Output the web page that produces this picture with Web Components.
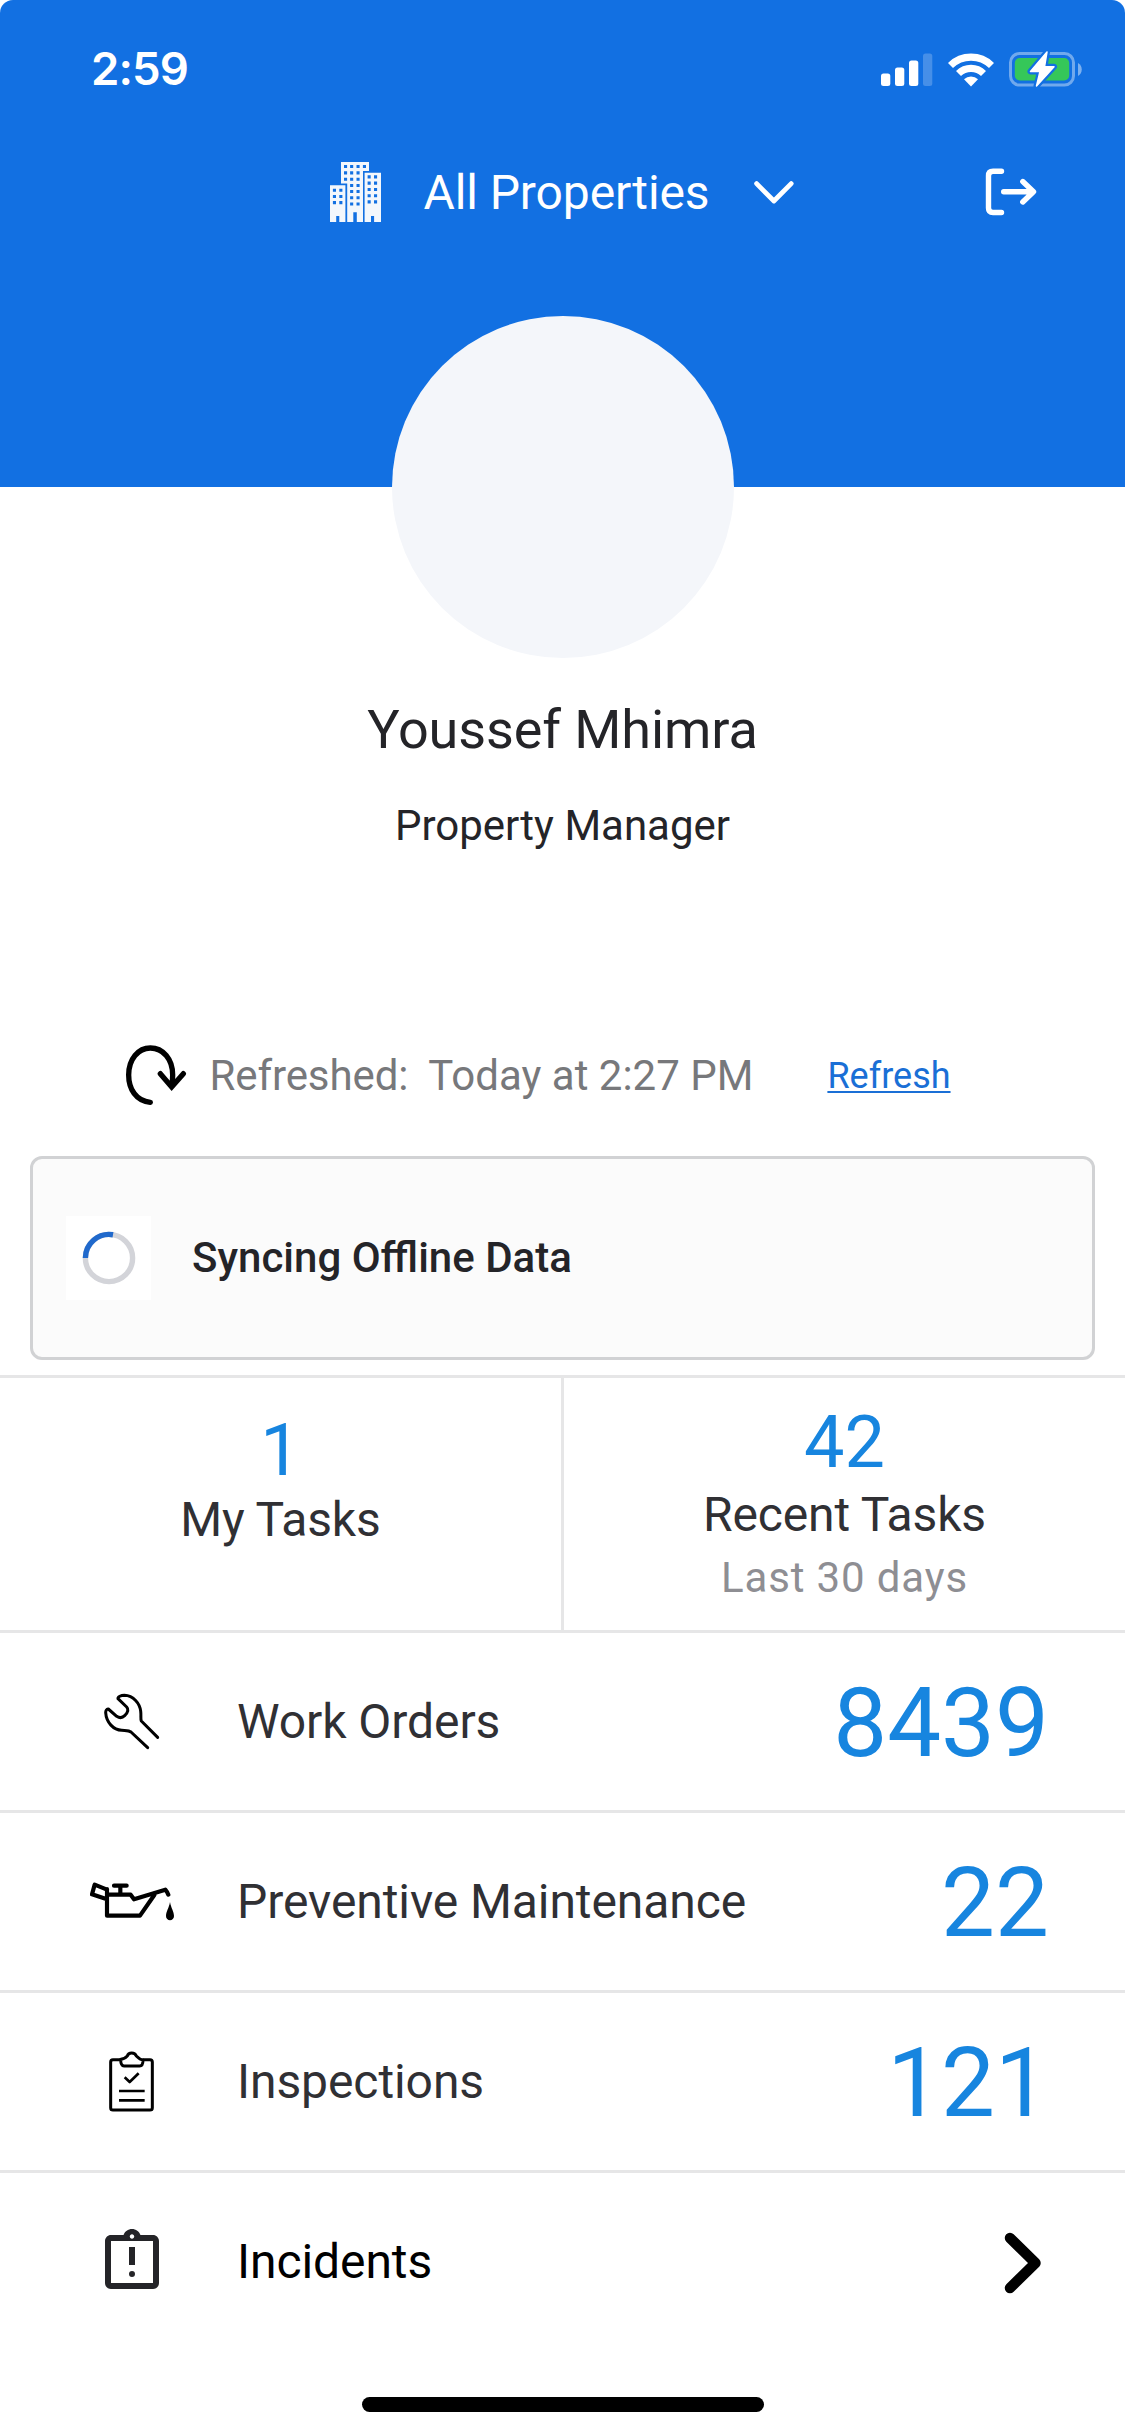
<!DOCTYPE html>
<html lang="en">
<head>
<meta charset="utf-8">
<title>Property Dashboard</title>
<style>
html,body{margin:0;padding:0;background:#fff}
</style>
</head>
<body>
<pm-app></pm-app>
<script>
function define(tag, css, html) {
  customElements.define(tag, class extends HTMLElement {
    constructor() {
      super();
      this.attachShadow({mode: 'open'}).innerHTML =
        '<style>*{box-sizing:border-box}svg{display:block;flex:none}' + css + '</style>' + (typeof html === 'function' ? html(this) : html);
    }
  });
}

/* Skyline glyph: three towers with window grids punched out. */
function skyline() {
  const w = (x, y, a = 3.1, b = 3.1) => `M${x} ${y}h${a}v${b}h${-a}z`;
  let d = 'M11 0H39V9H33V60H17.2V21.5H11ZM0 23.3H15.4V60H0ZM34.6 10.7H51V60H34.6Z';
  [3, 9.3, 15.7, 21.9, 28, 34.2, 40.5].forEach((y, i) => {
    if (i < 3) d += w(14, y);
    d += w(20.1, y) + w(26.5, y);
    if (!i) d += w(32.9, y);
  });
  [26.7, 33, 39.1].forEach(y => d += w(2.9, y) + w(9.3, y));
  [13.3, 19.6, 26, 32.2, 38.3].forEach(y => d += w(37.6, y) + w(44, y));
  d += w(6.2, 54, 3.1, 6) + w(23.3, 50.3, 3.5, 9.7) + w(41, 54, 3.1, 6);
  return `<svg width="51" height="60" viewBox="0 0 51 60"><path fill="#f3f7fc" fill-rule="evenodd" d="${d}"/></svg>`;
}

define('pm-status-bar', `
:host{display:flex;height:138px;padding:0 43px 0 91px;align-items:center;justify-content:space-between;color:#fff}
.time{font:600 45.500px/56px Inter,sans-serif;letter-spacing:-.9px}
.icons{display:flex;align-items:center;gap:15px}`, `
<span class="time">2:59</span>
<div class="icons">
<svg width="52" height="34" viewBox="0 0 52 34" fill="#fff"><rect y="21.500" width="9.300" height="12.500" rx="2.500"/><rect x="14" y="15.500" width="9.300" height="18.500" rx="2.500"/><rect x="28" y="8.500" width="9.300" height="25.500" rx="2.500"/><rect x="42" y="1.500" width="9.300" height="32.500" rx="2.500" opacity=".22"/></svg>
<svg width="46" height="35" viewBox="0 0 46 35" fill="none" stroke="#fff" stroke-width="7.200"><path d="M2.500 13.500A29.500 29.500 0 0 1 43.500 13.500M10.500 21.500A18 18 0 0 1 35.500 21.500"/><path fill="#fff" stroke="none" d="M23 34.500L16 27.300A10 10 0 0 1 30 27.300Z"/></svg>
<svg width="73" height="36" viewBox="0 0 73 36"><rect x="1.500" y="2.500" width="63" height="31.500" rx="9" fill="none" stroke="#fff" stroke-opacity=".4" stroke-width="3"/><path fill="#fff" fill-opacity=".45" d="M69 12C74 14.500 74 22.500 69 25Z"/><rect x="5.800" y="7" width="54.400" height="22.500" rx="5" fill="#35c759"/><path d="M38 1L21.500 20.500H31L27.500 35L45 15.800H35.500Z" fill="#fff" stroke="#1270e2" stroke-width="6" stroke-linejoin="round" paint-order="stroke"/><path d="M38 1L21.500 20.500H31L27.500 35L45 15.800H35.500Z" fill="#fff" stroke="#fff" stroke-width="1.500" stroke-linejoin="round"/></svg>
</div>`);

define('pm-property-picker', `
:host{display:grid;grid-template-columns:1fr auto 1fr;height:108px;align-items:center;padding:0 88px 0 88px}
.pick{grid-column:2;display:flex;align-items:center;margin-left:-1px}
.label{font-size:48px;line-height:60px;color:#fff;margin:2px 44px 0 42px;white-space:nowrap;letter-spacing:-.1px}
.exit{justify-self:end}`, `
<div class="pick">${skyline()}<span class="label"><slot></slot></span>
<svg width="40" height="23" viewBox="0 0 40 23" fill="none" stroke="#fff" stroke-width="4.800" stroke-linecap="round" stroke-linejoin="round"><path d="M2.600 2.600L19.900 20L37.200 2.600"/></svg></div>
<svg class="exit" width="52" height="48" viewBox="0 0 52 48" fill="none" stroke="#fff" stroke-width="5.400" stroke-linecap="round" stroke-linejoin="round"><path d="M16.500 3.300H8Q3.500 3.300 3.500 7.800V40Q3.500 44.500 8 44.500H16.500M18.700 23.700H48M37.800 13.500L48.500 23.700L37.800 34"/></svg>`);

define('pm-header', `:host{display:block;height:487px;background:#1270e2;border-radius:13px 13px 0 0}`, `
<pm-status-bar></pm-status-bar><pm-property-picker>All Properties</pm-property-picker>`);

define('pm-profile', `
:host{display:flex;flex-direction:column;align-items:center;margin-top:-171px;color:#242428}
.avatar{width:342px;height:342px;border-radius:50%;background:#f4f6fa}
.name{font-size:54px;line-height:64px;margin-top:40px;letter-spacing:-.1px}
.role{font-size:42px;line-height:50px;margin-top:39px}`, `
<div class="avatar"></div><div class="name"><slot name="name"></slot></div><div class="role"><slot name="role"></slot></div>`);

define('pm-refresh', `
:host{display:flex;height:90px;margin-top:180px;padding-left:125px;align-items:center;color:#77787b;font-size:42px;line-height:50px;white-space:nowrap}
svg{margin-top:-2px}
.k{margin-left:22.500px;letter-spacing:-.1px}.v{margin-left:20px}
a{margin-left:74px;font-size:36px;line-height:44px;color:#1a6fd6;text-decoration:underline;text-decoration-thickness:2px;text-underline-offset:3px}`, `
<svg width="62" height="62" viewBox="75 71 186 186" fill="none" stroke="#000" stroke-width="16" stroke-linecap="round"><path d="M151 246C108 242 86 206 86 164C86 116 115 83 151 83C189 83 218 116 218 164C218 178 217 188 215 198M181 160L215 200L250 160"/></svg>
<span class="k">Refreshed:</span><span class="v">Today at 2:27 PM</span><a>Refresh</a>`);

define('pm-sync-card', `
:host{display:flex;height:204px;margin:35px 30px 0;border:3px solid #d1d2d4;border-radius:12px;background:#fbfbfb;align-items:center;padding-left:33px}
.tile{width:85px;height:84px;background:#fff;display:flex;align-items:center;justify-content:center}
.t{margin-left:41px;font-size:42px;font-weight:500;line-height:50px;color:#242428}`, `
<div class="tile"><svg width="54" height="54" viewBox="-27 -27 54 54" fill="none" stroke-width="5.400"><circle r="23.600" stroke="#d3d4d9"/><path d="M-23.600 0A23.600 23.600 0 0 1 4 -23.250" stroke="#2069cc"/></svg></div>
<span class="t"><slot></slot></span>`);

define('pm-stat', `
:host{display:flex;flex-direction:column;align-items:center;padding-top:37px}
:host([wide]){padding-top:29px}
.n{font-size:72px;line-height:72px;color:#1785df}
.l{font-size:48px;line-height:60px;margin-top:3px;color:#303034;letter-spacing:-.15px}
:host([wide]) .l{margin-top:6px}
.s{font-size:42px;line-height:50px;margin-top:8px;color:#8e8e93;letter-spacing:.85px}`, `
<div class="n"><slot name="n"></slot></div><div class="l"><slot></slot></div><div class="s"><slot name="s"></slot></div>`);

define('pm-stats', `
:host{display:grid;grid-template-columns:561px 1fr;height:255px;margin-top:15px;border-top:3px solid #e6e6e7}
::slotted(:last-child){border-left:3px solid #e6e6e7}`, `<slot></slot>`);

const icons = {
  wrench: `<svg width="57" height="57" viewBox="131 129 171 171" fill="none" stroke="#000" stroke-width="9" stroke-linecap="round" stroke-linejoin="round"><path d="M292 262L243 213C240 207 243 198 241 183C238 160 220 137 192 136C182 136 172 140 173 146L199 171C206 179 201 189 193 197C185 205 177 204 169 199L144 177C139 176 136 182 136 188C138 218 160 240 184 241C199 242 206 241 212 246L262 293"/></svg>`,
  oil: `<svg width="84" height="40" viewBox="90 697 252 120" fill="none" stroke="#000" stroke-width="12.500" stroke-linejoin="round" stroke-linecap="round"><path d="M141 720L104 705L96 734L141 749M141 718V798H240L283 736M141 735H212L222 749L316 720Q322 727 325 735M162 708H200M181 708V735"/><path fill="#000" stroke="none" d="M330 757C327 775 318 786 318 799A12 13 0 0 0 342 799C342 786 333 775 330 757Z"/></svg>`,
  clipboard: `<svg width="46" height="61" viewBox="147 184 138 183" fill="none" stroke="#000" stroke-width="9" stroke-linejoin="round"><path d="M182 210H159Q152 210 152 217V354Q152 361 159 361H270Q277 361 277 354V217Q277 210 270 210H248"/><path d="M182 209C182 223 184 229 192 229H239C247 229 249 222 249 211C240 210 235 205 229 199C226 191 221 190 215 190C209 190 204 192 202 199C196 205 190 209 182 209Z"/><path stroke-width="8" d="M194 263L209 277L236 251M177 304H254M177 332H254"/></svg>`,
  late: `<svg width="72" height="72" viewBox="0 0 24 24" fill="#242428"><path d="M19 3h-4.180C14.400 1.840 13.300 1 12 1s-2.400.84-2.820 2H5c-1.100 0-2 .9-2 2v14c0 1.100.9 2 2 2h14c1.100 0 2-.9 2-2V5c0-1.100-.9-2-2-2zm-7-.25c.41 0 .75.34.75.75s-.34.75-.75.75-.75-.34-.75-.75.340-.75.750-.75zM19 19H5V5h14v14zM11 7h2v6h-2zM12 15a1 1 0 1 0 0 2 1 1 0 1 0 0-2z" fill-rule="evenodd"/></svg>`
};

define('pm-row', `
:host{display:flex;height:180px;border-top:3px solid #e6e6e7;align-items:center;padding:0 76px 0 60px;color:#303034}
:host([go]){color:#000}
.i{width:144px;display:flex;justify-content:center;flex:none}
.l{flex:1;margin-left:33px;font-size:48px;line-height:60px;letter-spacing:-.08px}
.n{font-size:96px;line-height:112px;color:#1785df;margin-top:2px}
.go{margin:3px 7px 0 0}`, el => `
<div class="i">${icons[el.getAttribute('icon')]}</div><span class="l"><slot></slot></span>
${el.hasAttribute('go')
  ? '<svg class="go" width="38" height="62" viewBox="0 0 38 62" fill="none" stroke="#000" stroke-width="10.500" stroke-linecap="round" stroke-linejoin="round"><path d="M6 6L31.500 31L6 56"/></svg>'
  : '<span class="n"><slot name="n"></slot></span>'}`);

define('pm-home-bar', `:host{display:block;width:402px;height:15px;border-radius:8px;background:#000;margin:47px auto 0}`, ``);

define('pm-app', `
:host{display:block;width:1125px;height:2436px;overflow:hidden;background:#fff;font-family:Roboto,sans-serif}`, `
<pm-header></pm-header>
<pm-profile><span slot="name">Youssef Mhimra</span><span slot="role">Property Manager</span></pm-profile>
<pm-refresh></pm-refresh>
<pm-sync-card>Syncing Offline Data</pm-sync-card>
<pm-stats>
<pm-stat><span slot="n">1</span>My Tasks</pm-stat>
<pm-stat wide><span slot="n">42</span>Recent Tasks<span slot="s">Last 30 days</span></pm-stat>
</pm-stats>
<pm-row icon="wrench">Work Orders<span slot="n">8439</span></pm-row>
<pm-row icon="oil">Preventive Maintenance<span slot="n">22</span></pm-row>
<pm-row icon="clipboard">Inspections<span slot="n">121</span></pm-row>
<pm-row icon="late" go>Incidents</pm-row>
<pm-home-bar></pm-home-bar>`);
</script>
</body>
</html>
